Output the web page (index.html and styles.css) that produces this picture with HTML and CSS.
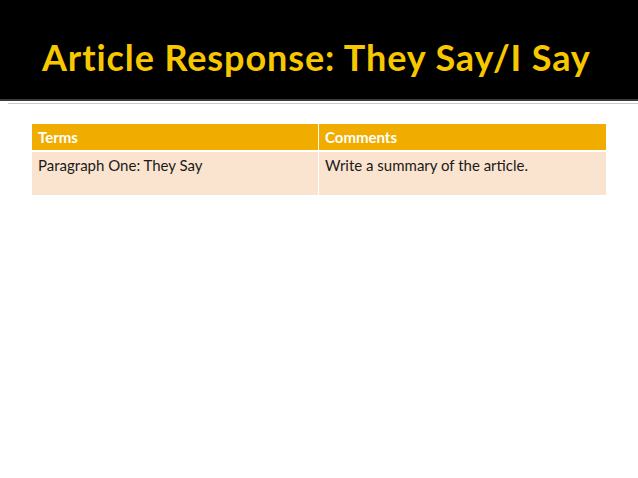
FILE: index.html
```html
<!DOCTYPE html>
<html>
<head>
<meta charset="utf-8">
<link rel="stylesheet" href="styles.css">
</head>
<body>
<header class="banner">
  <h1 class="title">Article Response: They Say/I Say</h1>
</header>
<div class="rule"></div>
<main class="content">
  <table class="grid">
    <thead>
      <tr><th class="c1">Terms</th><th class="c2">Comments</th></tr>
    </thead>
    <tbody>
      <tr><td class="c1">Paragraph One: They Say</td><td class="c2">Write a summary of the article.</td></tr>
    </tbody>
  </table>
</main>
</body>
</html>
```
FILE: styles.css
```css
html, body {
  margin: 0;
  padding: 0;
  background: #fff;
}
body {
  width: 638px;
  height: 478px;
  overflow: hidden;
  font-family: Lato, "Open Sans", sans-serif;
}
.banner {
  background: #000;
  height: 99px;
  border-bottom: 2px solid #3a3a3a;
  box-sizing: content-box;
  display: flex;
  align-items: flex-start;
}
.title {
  margin: 0;
  padding: 35px 0 0 42px;
  font-family: Lato, sans-serif;
  font-weight: 700;
  font-size: 36px;
  line-height: 44px;
  color: #f7c800;
  letter-spacing: 0.9px;
  white-space: nowrap;
}
.rule {
  margin: 2px 0 0 8px;
  height: 1px;
  background: #c8c8c8;
}
.content {
  padding: 20px 0 0 32px;
}
.grid {
  border-collapse: separate;
  border-spacing: 0;
  width: 574px;
}
.grid th, .grid td {
  text-align: left;
  padding: 0 0 0 6px;
  font-size: 15px;
  vertical-align: top;
}
.grid th {
  background: #f0ad00;
  color: #fff;
  font-weight: 700;
  height: 24px;
  line-height: 26px;
  border-bottom: 2px solid #fff;
}
.grid td {
  background: #fae4cf;
  color: #1a1a1a;
  height: 43px;
  line-height: 26px;
}
.grid .c1 {
  width: 280px;
  border-right: 1px solid #fff;
}
```
